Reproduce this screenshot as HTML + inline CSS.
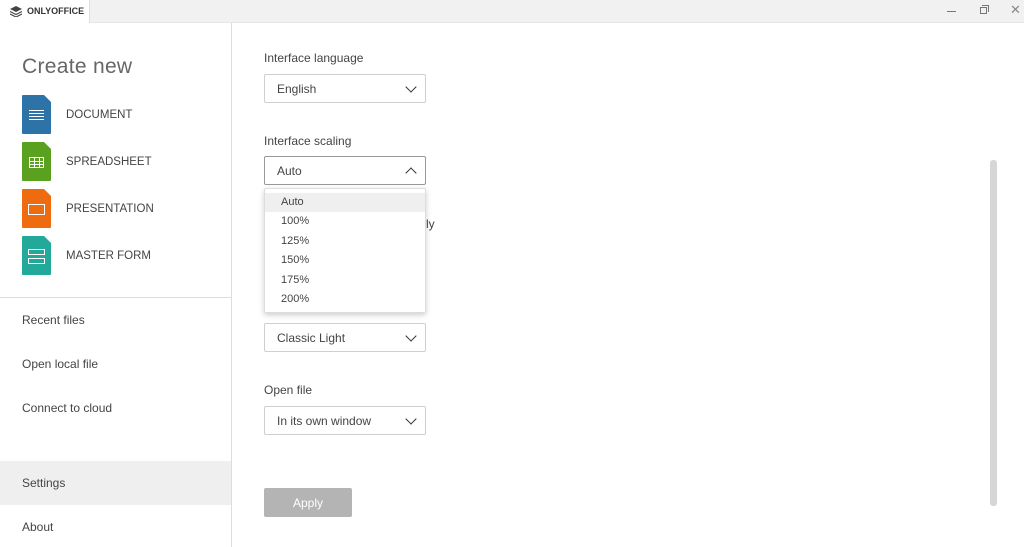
<!DOCTYPE html>
<html><head><meta charset="utf-8"><style>
*{margin:0;padding:0;box-sizing:border-box}
body{width:1024px;height:547px;overflow:hidden;background:#fff;font-family:"Liberation Sans",sans-serif;color:#444;position:relative}
.top{position:absolute;left:0;top:0;width:1024px;height:23px;background:#f1f1f1;border-bottom:1px solid #e6e6e6}
.tab{position:absolute;left:0;top:0;width:90px;height:23px;background:#fff;border-right:1px solid #ddd;font-size:9px;font-weight:bold;color:#333;padding:6px 0 0 27px}
.side{position:absolute;left:0;top:23px;width:232px;height:524px;border-right:1px solid #ddd}
.abs{position:absolute}
.ic{position:absolute;left:22px;width:29px;height:39px;border-radius:1px}
.ic:after{content:"";position:absolute;right:0;top:0;border-style:solid;border-width:0 7px 7px 0;border-color:transparent #fff transparent transparent}
.lbl{position:absolute;left:66px;font-size:11.5px;color:#444}
.nav{position:absolute;left:22px;font-size:12px;color:#444}
.f{position:absolute;left:264px;font-size:12px;color:#444}
.sel{position:absolute;left:264px;width:162px;height:29px;border:1px solid #cfcfcf;border-radius:2px;font-size:12px;padding:7px 12px}
.chev{position:absolute;right:10px;top:8px;width:8px;height:8px;border-right:1.5px solid #333;border-bottom:1.5px solid #333;transform:rotate(45deg)}
.dd{position:absolute;left:264px;top:188px;width:162px;height:125px;background:#fff;border:1px solid #ddd;border-radius:2px;box-shadow:0 2px 6px rgba(0,0,0,.2);font-size:11px}
.dd div{height:19.4px;padding:3px 0 0 16px}
</style></head><body>
<div class="top">
<div class="tab"><svg class="abs" style="left:10px;top:6px" width="12" height="11" viewBox="0 0 12 11"><path d="M6 0L12 3 6 6 0 3z" fill="#444"/><path d="M0 5.5L6 8.5 12 5.5M0 8L6 11 12 8" stroke="#444" fill="none" stroke-width="1.2"/></svg>ONLYOFFICE</div>
<div class="abs" style="left:947px;top:11px;width:9px;height:1px;background:#777"></div>
<div class="abs" style="left:980px;top:7px;width:7px;height:7px;border:1px solid #777"></div>
<div class="abs" style="left:982px;top:5px;width:7px;height:7px;border-top:1px solid #777;border-right:1px solid #777"></div>
<div class="abs" style="left:1010px;top:2px;font-size:13px;color:#888">✕</div>
</div>
<div class="side">
<div class="abs" style="left:22px;top:32px;font-size:21px;color:#666;letter-spacing:0.3px">Create new</div>
<div class="ic" style="top:72px;background:#2d73a8"></div><div class="lbl" style="top:86px">DOCUMENT</div>
<div class="ic" style="top:119px;background:#5aa11f"></div><div class="lbl" style="top:133px">SPREADSHEET</div>
<div class="ic" style="top:166px;background:#ee6b0f"></div><div class="lbl" style="top:180px">PRESENTATION</div>
<div class="ic" style="top:213px;background:#22a99a"></div><div class="lbl" style="top:227px">MASTER FORM</div>
<div class="abs" style="left:29px;top:87px;width:15px;height:1px;background:#fff;box-shadow:0 3px #fff,0 6px #fff,0 9px #fff"></div>
<div class="abs" style="left:29px;top:134px;width:15px;height:11px;border:1px solid #fff;background:linear-gradient(90deg,transparent 4px,#fff 4px,#fff 5px,transparent 5px,transparent 9px,#fff 9px,#fff 10px,transparent 10px),linear-gradient(transparent 3px,#fff 3px,#fff 4px,transparent 4px,transparent 6px,#fff 6px,#fff 7px,transparent 7px)"></div>
<div class="abs" style="left:28px;top:181px;width:17px;height:11px;border:1.5px solid #fff"></div>
<div class="abs" style="left:28px;top:226px;width:17px;height:6px;border:1.5px solid #fff"></div>
<div class="abs" style="left:28px;top:235px;width:17px;height:6px;border:1.5px solid #fff"></div>
<div class="abs" style="left:0;top:274px;width:231px;height:1px;background:#ddd"></div>
<div class="nav" style="top:290px">Recent files</div>
<div class="nav" style="top:334px">Open local file</div>
<div class="nav" style="top:378px">Connect to cloud</div>
<div class="abs" style="left:0;top:438px;width:231px;height:44px;background:#efefef"></div>
<div class="nav" style="top:453px">Settings</div>
<div class="nav" style="top:497px">About</div>
</div>
<div class="f" style="top:51px">Interface language</div>
<div class="sel" style="top:74px">English<div class="chev"></div></div>
<div class="f" style="top:134px">Interface scaling</div>
<div class="sel" style="top:156px;border-color:#999">Auto<div class="chev" style="top:12px;transform:rotate(225deg)"></div></div>
<div class="abs" style="left:426px;top:217px;font-size:12px">ly</div>
<div class="dd"><div style="background:#efefef;margin-top:4px">Auto</div><div>100%</div><div>125%</div><div>150%</div><div>175%</div><div>200%</div></div>
<div class="sel" style="top:323px">Classic Light<div class="chev"></div></div>
<div class="f" style="top:383px">Open file</div>
<div class="sel" style="top:406px">In its own window<div class="chev"></div></div>
<div class="abs" style="left:264px;top:488px;width:88px;height:29px;background:#b4b4b4;border-radius:2px;color:#fff;font-size:12px;text-align:center;padding-top:8px">Apply</div>
<div class="abs" style="left:990px;top:160px;width:7px;height:346px;background:#d6d6d6;border-radius:3px"></div>
</body></html>
